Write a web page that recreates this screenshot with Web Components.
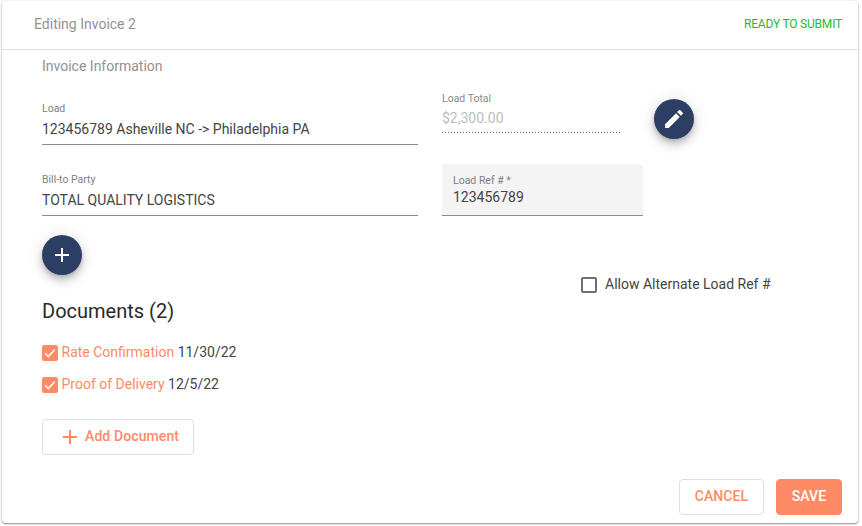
<!DOCTYPE html>
<html><head><meta charset="utf-8">
<style>
html,body{margin:0;padding:0;background:#fff;}
body{font-family:Roboto,"Liberation Sans",sans-serif;width:862px;height:526px;overflow:hidden;}
</style></head><body>
<invoice-card></invoice-card>
<script>
const def=(name,html)=>{customElements.define(name,class extends HTMLElement{constructor(){super();this.attachShadow({mode:'open'}).innerHTML=html;}});};

def('text-field',`<style>
:host{display:block;box-sizing:border-box;height:45px;border-bottom:1px solid #8c8c8c;flex:none}
.l{font-size:10.5px;line-height:14px;color:#808080;height:14px;margin-bottom:3px;padding-top:2px}
.v{font-size:14px;line-height:20px;color:#444;white-space:nowrap}
:host([kind=disabled]){border-bottom:none;height:43px;background:linear-gradient(to right,#666 1px,transparent 1px) left bottom/3px 1px repeat-x}
:host([kind=disabled]) .v{color:#bcbcbc}
:host([kind=disabled]) .l{margin-bottom:2px;color:#8a8a8a}
:host([kind=filled]){background:#f4f4f4;border-radius:4px 4px 0 0;padding:10px 11px 0;height:52px;}
:host([kind=filled]) .l{margin-bottom:0;padding-top:0;height:13px;line-height:13px}
</style><div class="l"><slot name="label"></slot></div><div class="v"><slot></slot></div>`);

def('round-fab',`<style>
:host{display:flex;align-items:center;justify-content:center;width:40px;height:40px;flex:none;border-radius:50%;background:#2c3e63;color:#fff;box-shadow:0 3px 5px -1px rgba(0,0,0,.2),0 6px 10px 0 rgba(0,0,0,.14),0 1px 18px 0 rgba(0,0,0,.12);}
</style><slot></slot>`);

def('check-row',`<style>
:host{display:flex;align-items:flex-start;font-size:14px;line-height:16px;color:#444;white-space:nowrap}
.box{box-sizing:border-box;width:16px;height:16px;border-radius:2px;margin-right:3.5px;flex:none;background:#ff8a65;display:flex;align-items:center;justify-content:center}
:host([unchecked]) .box{background:#fff;border:2px solid #6e6e6e;margin-right:8px;}
:host([unchecked]) svg{display:none}
svg{width:12px;height:12px;fill:none;stroke:#fff;stroke-width:1.5}
.txt{margin-top:-1px}
</style><span class="box"><svg viewBox="0 0 12 12"><path d="M1.2 6.2 4.4 9.6 10.8 2.6"/></svg></span><span class="txt"><slot></slot></span>`);

def('action-btn',`<style>
:host{display:inline-flex;box-sizing:border-box;height:36px;padding-bottom:2px;align-items:center;justify-content:center;border:1px solid #e0e0e0;border-radius:4px;background:#fff;color:#ff8a65;font-size:14px;font-weight:500;letter-spacing:.1px;white-space:nowrap}
:host([primary]){background:#ff8a65;color:#fff;border-color:#ff8a65}
</style><slot></slot>`);

def('invoice-card',`<style>
:host{display:block;box-sizing:border-box;width:856px;height:522px;margin:1px 0 0 2px;background:#fff;border-radius:4px;box-shadow:0 1px 2px rgba(0,0,0,.45),0 0 2px rgba(0,0,0,.1);color:#333;}
header{box-sizing:border-box;height:49px;border-bottom:1px solid #e0e0e0;display:flex;justify-content:space-between;align-items:center;padding:0 16px 2px 32px;}
.t{font-size:14px;color:#929292}
.s{font-size:12px;color:#27b933;letter-spacing:-.2px}
main{padding:0 0 0 40px;}
.info{font-size:14px;line-height:20px;color:#929292;padding-top:6px;}
.row{display:flex;align-items:flex-start;gap:24px}
.wide{width:376px}
.load{margin-top:24px}
.total{margin-top:14px;width:178px}
.fab1{margin:23px 0 0 10px}
.bill{margin-top:26px}
.ref{margin-top:19px;width:201px}
round-fab svg{width:24px;height:24px;fill:currentColor;display:block}
.lower{display:flex;align-items:flex-start}
.left{width:539px}
.fab2{margin-top:19px}
h2{font-size:20px;line-height:24px;font-weight:400;color:#2a2a2a;margin:24px 0 0}
.docs{margin-top:22px;display:flex;flex-direction:column;gap:16px}
a{color:#ff8a65}
.add{margin-top:26px;width:152px;justify-content:flex-start;gap:7px;padding-left:19px}
.add svg{width:16px;height:16px;stroke:#ff8a65;stroke-width:2;fill:none;flex:none;position:relative;top:1px}
.allow{margin-top:61px}
footer{display:flex;justify-content:flex-end;gap:12px;padding:24px 16px 0 0}
.c{width:85px}.sv{width:66px}
</style>
<header><span class="t">Editing Invoice 2</span><span class="s">READY TO SUBMIT</span></header>
<main>
<div class="info">Invoice Information</div>
<div class="row">
<text-field class="load wide"><span slot="label">Load</span>123456789 Asheville NC -&gt; Philadelphia PA</text-field>
<text-field class="total" kind="disabled"><span slot="label">Load Total</span>$2,300.00</text-field>
<round-fab class="fab1"><svg viewBox="0 0 24 24"><path d="M3 17.25V21h3.75L17.81 9.94l-3.75-3.75L3 17.25zM20.71 7.04a1 1 0 0 0 0-1.41l-2.34-2.34a1 1 0 0 0-1.41 0l-1.83 1.83 3.75 3.75 1.83-1.83z"/></svg></round-fab>
</div>
<div class="row">
<text-field class="bill wide"><span slot="label">Bill-to Party</span>TOTAL QUALITY LOGISTICS</text-field>
<text-field class="ref" kind="filled"><span slot="label">Load Ref # *</span>123456789</text-field>
</div>
<div class="lower">
<div class="left">
<round-fab class="fab2"><svg viewBox="0 0 24 24"><path d="M19 13h-6v6h-2v-6H5v-2h6V5h2v6h6v2z"/></svg></round-fab>
<h2>Documents (2)</h2>
<div class="docs">
<check-row><a>Rate Confirmation</a> 11/30/22</check-row>
<check-row><a>Proof of Delivery</a> 12/5/22</check-row>
</div>
<action-btn class="add"><svg viewBox="0 0 16 16"><path d="M8 1v14M1 8h14"/></svg>Add Document</action-btn>
</div>
<check-row class="allow" unchecked>Allow Alternate Load Ref #</check-row>
</div>
</main>
<footer><action-btn class="c">CANCEL</action-btn><action-btn class="sv" primary>SAVE</action-btn></footer>`);
</script></body></html>
